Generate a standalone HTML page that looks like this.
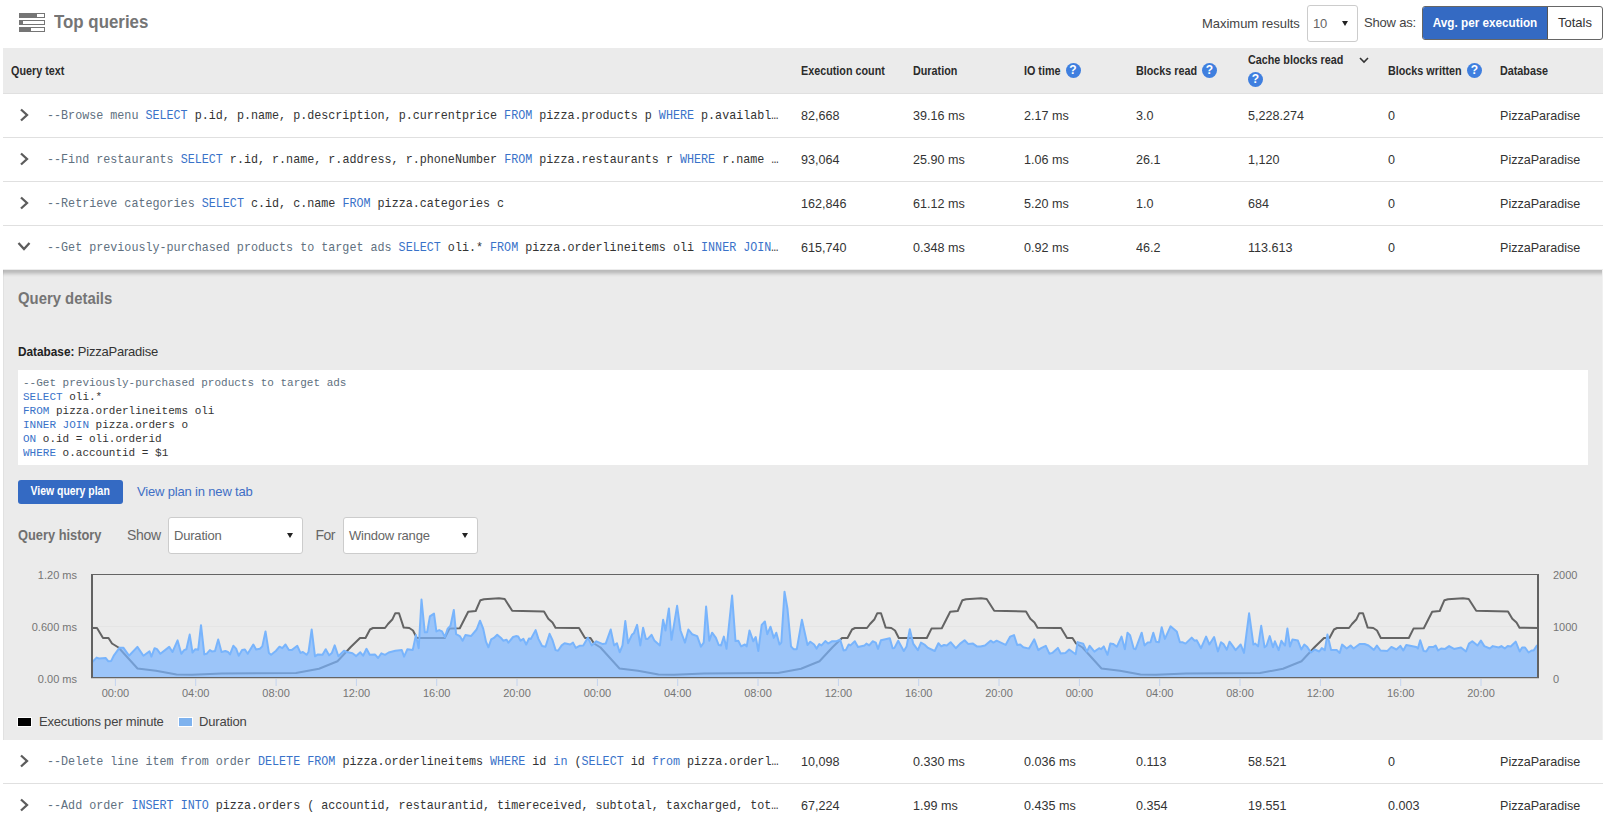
<!DOCTYPE html>
<html lang="en">
<head>
<meta charset="utf-8">
<title>Top queries</title>
<style>
*{box-sizing:border-box;}
html,body{margin:0;padding:0;background:#fff;}
body{width:1604px;height:824px;overflow:hidden;position:relative;font-family:"Liberation Sans",Arial,sans-serif;font-size:13px;color:#333;}
.abs{position:absolute;white-space:nowrap;}
/* title */
.title-icon{position:absolute;left:19px;top:13px;width:26px;height:19px;}
h1.title{position:absolute;left:54px;top:10px;margin:0;font-size:18.9px;line-height:24px;font-weight:bold;color:#757575;white-space:nowrap;transform:scaleX(.893);transform-origin:0 50%;}
/* top controls */
.ctl-label{position:absolute;font-size:13px;line-height:16px;color:#444;white-space:nowrap;letter-spacing:-0.03px;}
.select{position:absolute;background:#fff;border:1px solid #ccc;border-radius:3px;font-size:13px;color:#666;white-space:nowrap;}
.select span{position:absolute;left:5px;letter-spacing:-0.2px;top:50%;margin-top:-8px;line-height:16px;}
.select i{position:absolute;right:9px;top:50%;margin-top:-3px;width:0;height:0;border-left:3px solid transparent;border-right:3px solid transparent;border-top:5px solid #222;}
.btngroup{position:absolute;left:1422px;top:6px;width:181px;height:34px;border:1px solid #666;border-radius:3px;overflow:hidden;background:#fff;}
.btngroup .on{position:absolute;left:0;top:0;width:125px;height:32px;background:#346ac3;color:#fff;font-weight:bold;font-size:12.8px;line-height:32px;text-align:center;border-right:1px solid #555;}
.btngroup .off{position:absolute;left:125px;top:0;width:54px;height:32px;color:#333;font-size:13px;line-height:32px;text-align:center;}
/* table */
table.q{position:absolute;left:3px;top:48px;width:1600px;border-collapse:collapse;table-layout:fixed;}
table.q th{height:45px;line-height:15px;background:#ebebeb;text-align:left;font-size:12.4px;font-weight:bold;color:#2b2b2b;padding:3px 0 0 8px;vertical-align:middle;white-space:nowrap;border-bottom:1px solid #e0e0e0;position:relative;}
table.q td{height:44px;padding:0 0 0 8px;font-size:13px;letter-spacing:-0.22px;color:#333;vertical-align:middle;white-space:nowrap;border-bottom:1px solid #e0e0e0;overflow:hidden;}
table.q td.qt{padding-left:0;position:relative;}
.v{display:inline-block;font-size:13.4px;letter-spacing:0;transform:scaleX(.938);transform-origin:0 50%;}
.chev{position:absolute;left:16px;top:14px;width:10px;height:14px;}
.sql{position:absolute;left:44px;top:14.5px;letter-spacing:0;font-family:"Liberation Mono","DejaVu Sans Mono",monospace;font-size:12.2px;line-height:16px;color:#333;white-space:pre;transform:scaleX(.9615);transform-origin:0 50%;}
.c{color:#607080;}
.k{color:#3972c9;}
.ht{display:inline-block;transform:scaleX(.87);transform-origin:0 50%;}
.help{display:inline-block;width:15px;height:15px;border-radius:50%;background:#3f7fdf;color:#fff;font-size:12px;line-height:15px;text-align:center;font-weight:bold;letter-spacing:0;position:absolute;top:15px;}
/* details panel */
.panel{z-index:1;position:absolute;left:3px;top:270px;width:1600px;height:470px;background:#ebebeb linear-gradient(to bottom,#bbb 0,#bbb .5px,#bebebe 1.5px,#c5c5c5 2.5px,#d0d0d0 3.5px,#dadada 4.5px,#e3e3e3 5.5px,#e8e8e8 6.5px,#ebebeb 7.5px) no-repeat;background-size:100% 8px;border-right:1px solid #f1f1f1;box-shadow:inset 1px 0 0 0 rgba(0,0,0,.04);}
.panel h2{position:absolute;left:15px;top:19px;margin:0;font-size:16px;line-height:20px;font-weight:bold;color:#757575;white-space:nowrap;transform:scaleX(.929);transform-origin:0 50%;}
.dbline{position:absolute;left:15px;top:74px;font-size:13px;line-height:16px;color:#333;white-space:nowrap;letter-spacing:-0.22px;}
.dbline b{color:#222;letter-spacing:0;font-size:13.4px;display:inline-block;transform:scaleX(.881);transform-origin:0 50%;margin-right:-7.6px;}
pre.code{position:absolute;left:15px;top:100px;width:1570px;height:95px;margin:0;background:#fff;padding:6px 0 0 5px;font-family:"Liberation Mono","DejaVu Sans Mono",monospace;font-size:11.5px;letter-spacing:0;line-height:14px;color:#333;}
pre.code code{display:block;font:inherit;transform:scaleX(.9565);transform-origin:0 0;}
.btn{position:absolute;left:15px;top:210px;width:105px;height:24px;background:#346ac3;border-radius:3px;color:#fff;font-weight:bold;font-size:11.9px;line-height:23px;text-align:center;white-space:nowrap;}
.btn span,.btngroup .on span{display:inline-block;transform-origin:50% 50%;}
.btn span{transform:scaleX(.877);}
.btngroup .on span{transform:scaleX(.916);}
a.link{position:absolute;left:134px;top:214px;font-size:13px;letter-spacing:-0.17px;line-height:16px;color:#3f6fc6;text-decoration:none;white-space:nowrap;}
.qh{position:absolute;left:15px;top:256px;font-size:14.3px;line-height:18px;font-weight:bold;color:#707070;white-space:nowrap;transform:scaleX(.898);transform-origin:0 50%;}
.lbl{position:absolute;font-size:14px;line-height:18px;color:#666;white-space:nowrap;letter-spacing:-0.3px;}
.legend{position:absolute;font-size:13px;line-height:16px;color:#444;white-space:nowrap;letter-spacing:-0.19px;}
.sw{position:absolute;width:15px;height:10px;border:1px solid #fff;}
svg.chart{position:absolute;left:0;top:290px;}
svg.chart text{font-family:"Liberation Sans",Arial,sans-serif;font-size:11px;fill:#757575;}
table.q tr.open td{border-bottom-color:#ececec;}
/* bottom table */
table.q2{top:740px;}
table.q2 tr:first-child td{height:43px;}
table.q2 tr:first-child .sql{top:13.5px;}
</style>
</head>
<body>

<svg class="title-icon" viewBox="0 0 26 19" aria-hidden="true">
  <g fill="#757575"><rect x="0" y="0" width="18" height="5"/><rect x="0" y="7" width="4" height="5"/><rect x="0" y="14" width="12" height="5"/></g>
  <g fill="#fff" stroke="#757575" stroke-width="1"><rect x="17.5" y="0.5" width="8" height="4"/><rect x="3.5" y="7.5" width="22" height="4"/><rect x="11.5" y="14.5" width="14" height="4"/></g>
</svg>
<h1 class="title">Top queries</h1>

<div class="ctl-label" style="left:1202px;top:16px;">Maximum results</div>
<div class="select" style="left:1307px;top:5px;width:51px;height:37px;"><span>10</span><i></i></div>
<div class="ctl-label" style="left:1364px;top:15px;letter-spacing:-0.2px;">Show as:</div>
<div class="btngroup"><div class="on"><span>Avg. per execution</span></div><div class="off">Totals</div></div>

<table class="q">
<colgroup><col style="width:790px"><col style="width:112px"><col style="width:111px"><col style="width:112px"><col style="width:112px"><col style="width:140px"><col style="width:112px"><col style="width:111px"></colgroup>
<thead><tr>
<th><span class="ht">Query text</span></th>
<th><span class="ht">Execution count</span></th>
<th><span class="ht">Duration</span></th>
<th><span class="ht">IO time</span><span class="help" style="left:49.5px;">?</span></th>
<th><span class="ht">Blocks read</span><span class="help" style="left:74px;">?</span></th>
<th class="cbr"><div class="abs ht" style="left:8px;top:5px;line-height:14px;">Cache blocks read</div><svg class="abs" style="left:119px;top:9px;" width="10" height="7" viewBox="0 0 10 7"><path d="M1 1 L5 5 L9 1" fill="none" stroke="#333" stroke-width="1.6"/></svg><span class="help" style="left:8px;top:24px;">?</span></th>
<th><span class="ht">Blocks written</span><span class="help" style="left:87px;">?</span></th>
<th><span class="ht">Database</span></th>
</tr></thead>
<tbody>
<tr><td class="qt"><svg class="chev" viewBox="0 0 10 14"><path d="M2 1.5 L8 7 L2 12.5" fill="none" stroke="#5c5c5c" stroke-width="2.3"/></svg><div class="sql"><span class="c">--Browse menu</span> <span class="k">SELECT</span> p.id, p.name, p.description, p.currentprice <span class="k">FROM</span> pizza.products p <span class="k">WHERE</span> p.availabl…</div></td><td><span class="v">82,668</span></td><td><span class="v">39.16 ms</span></td><td><span class="v">2.17 ms</span></td><td><span class="v">3.0</span></td><td><span class="v">5,228.274</span></td><td><span class="v">0</span></td><td><span class="v">PizzaParadise</span></td></tr>
<tr><td class="qt"><svg class="chev" viewBox="0 0 10 14"><path d="M2 1.5 L8 7 L2 12.5" fill="none" stroke="#5c5c5c" stroke-width="2.3"/></svg><div class="sql"><span class="c">--Find restaurants</span> <span class="k">SELECT</span> r.id, r.name, r.address, r.phoneNumber <span class="k">FROM</span> pizza.restaurants r <span class="k">WHERE</span> r.name …</div></td><td><span class="v">93,064</span></td><td><span class="v">25.90 ms</span></td><td><span class="v">1.06 ms</span></td><td><span class="v">26.1</span></td><td><span class="v">1,120</span></td><td><span class="v">0</span></td><td><span class="v">PizzaParadise</span></td></tr>
<tr><td class="qt"><svg class="chev" viewBox="0 0 10 14"><path d="M2 1.5 L8 7 L2 12.5" fill="none" stroke="#5c5c5c" stroke-width="2.3"/></svg><div class="sql"><span class="c">--Retrieve categories</span> <span class="k">SELECT</span> c.id, c.name <span class="k">FROM</span> pizza.categories c</div></td><td><span class="v">162,846</span></td><td><span class="v">61.12 ms</span></td><td><span class="v">5.20 ms</span></td><td><span class="v">1.0</span></td><td><span class="v">684</span></td><td><span class="v">0</span></td><td><span class="v">PizzaParadise</span></td></tr>
<tr class="open"><td class="qt"><svg class="chev" style="left:14px;top:15px;width:14px;height:10px;" viewBox="0 0 14 10"><path d="M1.5 2 L7 8 L12.5 2" fill="none" stroke="#5c5c5c" stroke-width="2.3"/></svg><div class="sql"><span class="c">--Get previously-purchased products to target ads</span> <span class="k">SELECT</span> oli.* <span class="k">FROM</span> pizza.orderlineitems oli <span class="k">INNER JOIN</span>…</div></td><td><span class="v">615,740</span></td><td><span class="v">0.348 ms</span></td><td><span class="v">0.92 ms</span></td><td><span class="v">46.2</span></td><td><span class="v">113.613</span></td><td><span class="v">0</span></td><td><span class="v">PizzaParadise</span></td></tr>
</tbody>
</table>

<div class="panel">
  <h2>Query details</h2>
  <div class="dbline"><b>Database:</b> PizzaParadise</div>
<pre class="code"><code><span class="c">--Get previously-purchased products to target ads</span>
<span class="k">SELECT</span> oli.*
<span class="k">FROM</span> pizza.orderlineitems oli
<span class="k">INNER JOIN</span> pizza.orders o
<span class="k">ON</span> o.id = oli.orderid
<span class="k">WHERE</span> o.accountid = $1</code></pre>
  <div class="btn"><span>View query plan</span></div>
  <a class="link">View plan in new tab</a>
  <div class="qh">Query history</div>
  <div class="lbl" style="left:124px;top:256px;">Show</div>
  <div class="select" style="left:165px;top:247px;width:135px;height:37px;"><span>Duration</span><i></i></div>
  <div class="lbl" style="left:312.5px;top:256px;letter-spacing:-0.5px;">For</div>
  <div class="select" style="left:340px;top:247px;width:135px;height:37px;"><span>Window range</span><i></i></div>
  <svg class="chart" style="left:-3px;top:290px;" width="1604" height="150" viewBox="0 560 1604 150">
<line x1="92" y1="626.5" x2="1538" y2="626.5" stroke="#e5e5e5" stroke-width="1"/>
<polyline points="92.0,628.0 97.0,628.0 103.0,638.0 108.5,638.0 112.0,643.5 118.5,647.5 137.5,668.5 156.0,670.7 176.5,674.4 192.0,674.8 222.0,673.5 296.0,673.0 319.0,668.8 337.5,661.3 350.5,647.3 360.0,638.0 365.5,638.0 370.0,629.5 373.0,628.0 385.0,628.0 388.0,624.0 392.5,619.2 395.3,613.2 399.0,613.2 403.7,627.6 409.3,628.0 413.0,630.5 416.8,638.0 444.8,638.0 449.5,628.6 459.8,628.3 468.2,611.8 475.7,611.0 480.4,600.2 484.0,599.2 499.0,598.3 504.7,599.0 512.2,610.8 544.0,611.4 548.3,618.8 552.5,622.5 555.5,627.8 574.0,628.0 579.0,628.0 585.0,638.0 590.5,638.0 594.0,643.5 600.5,647.5 619.5,668.5 638.0,670.7 658.5,674.4 674.0,674.8 704.0,673.5 778.0,673.0 801.0,668.8 819.5,661.3 832.5,647.3 842.0,638.0 847.5,638.0 852.0,629.5 855.0,628.0 867.0,628.0 870.0,624.0 874.5,619.2 877.3,613.2 881.0,613.2 885.7,627.6 891.3,628.0 895.0,630.5 898.8,638.0 926.8,638.0 931.5,628.6 941.8,628.3 950.2,611.8 957.7,611.0 962.4,600.2 966.0,599.2 981.0,598.3 986.7,599.0 994.2,610.8 1026.0,611.4 1030.3,618.8 1034.5,622.5 1037.5,627.8 1056.0,628.0 1061.0,628.0 1067.0,638.0 1072.5,638.0 1076.0,643.5 1082.5,647.5 1101.5,668.5 1120.0,670.7 1140.5,674.4 1156.0,674.8 1186.0,673.5 1260.0,673.0 1283.0,668.8 1301.5,661.3 1314.5,647.3 1324.0,638.0 1329.5,638.0 1334.0,629.5 1337.0,628.0 1349.0,628.0 1352.0,624.0 1356.5,619.2 1359.3,613.2 1363.0,613.2 1367.7,627.6 1373.3,628.0 1377.0,630.5 1380.8,638.0 1408.8,638.0 1413.5,628.6 1423.8,628.3 1432.2,611.8 1439.7,611.0 1444.4,600.2 1448.0,599.2 1463.0,598.3 1468.7,599.0 1476.2,610.8 1508.0,611.4 1512.3,618.8 1516.5,622.5 1519.5,627.8 1538.0,628.0" fill="none" stroke="#646464" stroke-width="2" stroke-linejoin="round"/>
<polygon points="92.1,677.5 92.1,662.3 96.6,657.6 99.0,658.5 105.6,658.0 108.4,661.3 111.2,660.9 114.0,655.3 119.6,647.7 123.3,647.7 129.0,655.7 137.4,646.9 143.4,655.7 149.5,651.4 151.4,656.6 154.6,648.2 157.0,649.2 160.4,653.8 169.2,646.9 172.5,652.0 177.6,640.4 181.3,653.8 184.1,650.1 186.4,649.2 189.7,634.6 192.5,652.5 195.3,649.2 198.2,649.7 201.0,625.2 204.3,654.4 206.6,653.8 209.9,650.1 212.2,651.6 215.0,651.0 218.2,639.4 221.5,652.0 225.3,651.0 228.1,652.0 230.0,654.4 233.3,645.8 236.1,648.6 238.7,655.7 242.1,650.1 244.9,649.5 247.7,653.8 253.3,644.5 256.1,649.5 259.9,648.8 262.3,646.4 265.5,631.4 268.9,652.9 271.1,654.8 275.8,651.0 279.5,646.7 282.3,648.2 285.5,644.5 288.9,650.1 291.7,650.1 297.3,645.8 300.5,652.9 302.9,652.0 306.6,654.8 308.5,652.0 311.7,629.5 315.0,656.3 317.9,654.4 322.5,654.8 325.7,649.2 329.1,655.3 331.9,652.9 334.7,645.4 338.4,656.3 344.0,650.7 346.8,652.0 352.5,653.3 356.2,656.1 360.3,652.3 363.1,655.7 366.5,648.8 369.7,654.8 374.9,654.4 378.1,658.0 381.4,653.3 385.0,654.8 388.7,652.5 395.3,650.7 401.8,650.1 404.1,656.6 407.4,649.2 412.7,650.1 415.9,635.1 418.7,648.2 421.5,599.6 424.8,632.3 427.1,632.3 429.9,616.4 434.0,613.6 436.4,631.4 439.2,630.1 442.0,631.4 444.9,637.0 447.7,628.6 450.5,625.8 453.8,609.9 456.1,634.2 459.8,636.1 462.6,640.7 465.4,635.1 471.0,636.1 476.6,629.5 480.0,620.7 483.2,628.6 486.0,641.7 488.4,647.3 491.2,639.4 493.9,637.9 497.2,634.8 501.0,637.9 503.2,640.7 506.6,639.8 508.4,642.6 513.1,637.0 515.9,636.1 518.2,636.6 520.6,640.7 523.4,638.9 526.2,644.5 529.0,638.5 530.9,638.9 535.6,630.1 538.4,638.9 542.1,646.0 545.5,646.7 549.6,633.8 552.4,639.8 555.6,650.1 558.0,650.7 561.7,645.4 564.6,643.2 570.2,644.5 573.0,642.6 575.8,647.9 579.5,645.8 583.3,645.4 587.9,637.6 591.7,645.4 596.3,641.3 602.9,644.1 605.7,643.6 610.7,629.5 614.1,645.4 616.9,643.2 619.7,652.3 622.5,645.4 625.3,621.1 628.1,643.2 631.9,634.8 633.8,633.3 637.1,624.9 640.3,645.4 643.1,627.7 645.9,638.9 647.8,638.9 651.5,634.8 654.3,640.4 659.9,645.4 663.1,619.8 665.5,630.5 668.9,608.4 671.5,639.8 677.1,605.8 680.5,630.5 685.0,642.6 688.4,629.5 692.1,634.2 697.2,636.1 700.9,646.7 703.7,642.6 706.1,606.5 709.3,640.7 712.1,632.7 715.9,637.9 718.7,645.0 721.1,645.4 723.9,636.6 726.5,648.8 732.1,595.5 735.5,641.1 738.3,640.7 741.1,646.4 744.9,644.5 746.7,646.4 749.5,630.5 753.3,641.3 755.7,637.0 758.3,651.0 761.7,624.9 764.9,621.5 767.3,634.2 770.5,626.7 773.8,637.9 776.3,632.7 779.5,644.5 781.3,642.6 784.5,591.7 787.5,609.0 791.0,646.4 793.5,649.2 796.8,649.2 801.9,619.8 807.5,645.0 810.3,641.7 814.1,644.5 816.5,648.6 819.3,644.1 821.5,645.4 825.3,641.1 828.1,643.6 831.8,641.3 836.5,641.3 840.2,639.8 843.6,650.5 845.8,650.1 848.7,644.5 850.5,645.4 854.8,641.3 858.0,646.9 864.6,645.4 866.4,643.6 869.2,645.4 872.6,641.3 875.8,642.6 878.0,648.8 881.0,640.2 889.8,638.3 892.6,648.2 894.5,647.9 898.2,640.7 903.8,651.0 906.6,646.4 909.8,629.2 913.2,643.6 917.9,650.1 921.0,642.6 924.4,644.5 928.1,647.9 934.7,651.0 938.4,643.2 941.2,646.4 944.0,645.0 946.8,645.4 950.6,642.2 955.8,648.2 959.9,643.9 964.6,640.2 968.4,644.1 973.0,643.6 976.8,646.4 980.5,646.4 985.0,645.4 990.6,640.7 993.4,642.6 996.6,640.7 1005.6,644.9 1010.2,636.6 1014.0,635.1 1017.2,645.0 1020.2,644.5 1023.3,647.3 1029.0,648.6 1034.2,639.4 1038.3,650.1 1041.1,648.2 1045.8,645.8 1049.5,653.8 1052.3,652.9 1057.9,647.9 1060.7,653.5 1065.4,652.9 1069.2,649.5 1075.7,654.2 1077.6,642.1 1083.2,643.6 1086.9,651.6 1089.7,645.8 1094.4,651.6 1099.1,648.2 1101.0,649.2 1103.8,646.4 1107.5,654.8 1110.3,643.6 1113.1,643.9 1116.9,646.7 1121.5,636.6 1124.9,649.2 1127.5,632.7 1130.0,635.1 1133.7,648.6 1135.6,649.2 1141.7,632.7 1144.5,645.4 1147.7,642.6 1150.5,642.2 1153.3,632.7 1156.1,641.7 1158.9,642.2 1161.7,627.3 1164.9,638.9 1170.5,626.3 1176.7,631.4 1179.9,642.2 1182.3,642.2 1185.5,643.6 1191.7,637.6 1194.5,640.7 1196.7,640.2 1201.0,648.2 1206.1,636.6 1209.4,644.5 1214.1,637.0 1217.9,651.4 1221.0,642.2 1223.5,644.1 1226.8,649.7 1229.5,641.7 1232.3,645.4 1235.6,650.1 1240.7,644.5 1244.0,652.9 1249.1,613.3 1253.4,644.5 1255.3,643.6 1258.1,646.4 1261.2,625.8 1264.6,647.3 1266.5,645.8 1269.7,636.1 1273.0,647.3 1274.9,641.3 1278.6,650.1 1281.4,640.7 1283.3,643.6 1285.0,645.5 1287.4,628.6 1290.0,646.5 1292.4,639.6 1297.9,640.6 1301.3,649.5 1304.3,644.6 1307.3,647.1 1310.9,652.5 1314.8,649.5 1319.2,651.5 1321.8,648.1 1324.8,650.1 1327.4,634.6 1331.1,649.9 1336.7,650.1 1339.7,652.9 1342.1,644.6 1346.7,648.5 1350.6,645.5 1353.6,648.5 1359.6,644.0 1364.6,644.0 1368.5,645.5 1373.9,649.9 1376.9,645.5 1380.5,650.5 1387.4,650.9 1391.4,646.9 1396.4,649.5 1400.3,645.9 1403.3,650.5 1406.3,645.1 1416.3,646.9 1417.9,648.5 1420.2,640.2 1423.6,650.9 1426.2,651.5 1429.2,646.9 1433.2,647.1 1435.6,645.5 1438.1,650.5 1441.1,648.5 1445.1,648.9 1449.1,646.1 1454.0,648.9 1461.0,647.5 1466.0,651.5 1469.0,643.6 1472.3,641.2 1477.5,645.5 1480.9,640.6 1484.3,646.1 1489.8,648.5 1492.8,646.1 1498.8,647.5 1501.4,646.1 1504.8,648.5 1507.7,646.1 1510.7,646.5 1515.7,641.6 1519.7,651.5 1522.1,647.5 1525.0,647.5 1528.6,652.5 1531.6,650.5 1533.6,650.5 1537.2,645.1 1537.2,677.5" fill="#7ab5ff" fill-opacity="0.7" stroke="none"/>
<polyline points="92.1,662.3 96.6,657.6 99.0,658.5 105.6,658.0 108.4,661.3 111.2,660.9 114.0,655.3 119.6,647.7 123.3,647.7 129.0,655.7 137.4,646.9 143.4,655.7 149.5,651.4 151.4,656.6 154.6,648.2 157.0,649.2 160.4,653.8 169.2,646.9 172.5,652.0 177.6,640.4 181.3,653.8 184.1,650.1 186.4,649.2 189.7,634.6 192.5,652.5 195.3,649.2 198.2,649.7 201.0,625.2 204.3,654.4 206.6,653.8 209.9,650.1 212.2,651.6 215.0,651.0 218.2,639.4 221.5,652.0 225.3,651.0 228.1,652.0 230.0,654.4 233.3,645.8 236.1,648.6 238.7,655.7 242.1,650.1 244.9,649.5 247.7,653.8 253.3,644.5 256.1,649.5 259.9,648.8 262.3,646.4 265.5,631.4 268.9,652.9 271.1,654.8 275.8,651.0 279.5,646.7 282.3,648.2 285.5,644.5 288.9,650.1 291.7,650.1 297.3,645.8 300.5,652.9 302.9,652.0 306.6,654.8 308.5,652.0 311.7,629.5 315.0,656.3 317.9,654.4 322.5,654.8 325.7,649.2 329.1,655.3 331.9,652.9 334.7,645.4 338.4,656.3 344.0,650.7 346.8,652.0 352.5,653.3 356.2,656.1 360.3,652.3 363.1,655.7 366.5,648.8 369.7,654.8 374.9,654.4 378.1,658.0 381.4,653.3 385.0,654.8 388.7,652.5 395.3,650.7 401.8,650.1 404.1,656.6 407.4,649.2 412.7,650.1 415.9,635.1 418.7,648.2 421.5,599.6 424.8,632.3 427.1,632.3 429.9,616.4 434.0,613.6 436.4,631.4 439.2,630.1 442.0,631.4 444.9,637.0 447.7,628.6 450.5,625.8 453.8,609.9 456.1,634.2 459.8,636.1 462.6,640.7 465.4,635.1 471.0,636.1 476.6,629.5 480.0,620.7 483.2,628.6 486.0,641.7 488.4,647.3 491.2,639.4 493.9,637.9 497.2,634.8 501.0,637.9 503.2,640.7 506.6,639.8 508.4,642.6 513.1,637.0 515.9,636.1 518.2,636.6 520.6,640.7 523.4,638.9 526.2,644.5 529.0,638.5 530.9,638.9 535.6,630.1 538.4,638.9 542.1,646.0 545.5,646.7 549.6,633.8 552.4,639.8 555.6,650.1 558.0,650.7 561.7,645.4 564.6,643.2 570.2,644.5 573.0,642.6 575.8,647.9 579.5,645.8 583.3,645.4 587.9,637.6 591.7,645.4 596.3,641.3 602.9,644.1 605.7,643.6 610.7,629.5 614.1,645.4 616.9,643.2 619.7,652.3 622.5,645.4 625.3,621.1 628.1,643.2 631.9,634.8 633.8,633.3 637.1,624.9 640.3,645.4 643.1,627.7 645.9,638.9 647.8,638.9 651.5,634.8 654.3,640.4 659.9,645.4 663.1,619.8 665.5,630.5 668.9,608.4 671.5,639.8 677.1,605.8 680.5,630.5 685.0,642.6 688.4,629.5 692.1,634.2 697.2,636.1 700.9,646.7 703.7,642.6 706.1,606.5 709.3,640.7 712.1,632.7 715.9,637.9 718.7,645.0 721.1,645.4 723.9,636.6 726.5,648.8 732.1,595.5 735.5,641.1 738.3,640.7 741.1,646.4 744.9,644.5 746.7,646.4 749.5,630.5 753.3,641.3 755.7,637.0 758.3,651.0 761.7,624.9 764.9,621.5 767.3,634.2 770.5,626.7 773.8,637.9 776.3,632.7 779.5,644.5 781.3,642.6 784.5,591.7 787.5,609.0 791.0,646.4 793.5,649.2 796.8,649.2 801.9,619.8 807.5,645.0 810.3,641.7 814.1,644.5 816.5,648.6 819.3,644.1 821.5,645.4 825.3,641.1 828.1,643.6 831.8,641.3 836.5,641.3 840.2,639.8 843.6,650.5 845.8,650.1 848.7,644.5 850.5,645.4 854.8,641.3 858.0,646.9 864.6,645.4 866.4,643.6 869.2,645.4 872.6,641.3 875.8,642.6 878.0,648.8 881.0,640.2 889.8,638.3 892.6,648.2 894.5,647.9 898.2,640.7 903.8,651.0 906.6,646.4 909.8,629.2 913.2,643.6 917.9,650.1 921.0,642.6 924.4,644.5 928.1,647.9 934.7,651.0 938.4,643.2 941.2,646.4 944.0,645.0 946.8,645.4 950.6,642.2 955.8,648.2 959.9,643.9 964.6,640.2 968.4,644.1 973.0,643.6 976.8,646.4 980.5,646.4 985.0,645.4 990.6,640.7 993.4,642.6 996.6,640.7 1005.6,644.9 1010.2,636.6 1014.0,635.1 1017.2,645.0 1020.2,644.5 1023.3,647.3 1029.0,648.6 1034.2,639.4 1038.3,650.1 1041.1,648.2 1045.8,645.8 1049.5,653.8 1052.3,652.9 1057.9,647.9 1060.7,653.5 1065.4,652.9 1069.2,649.5 1075.7,654.2 1077.6,642.1 1083.2,643.6 1086.9,651.6 1089.7,645.8 1094.4,651.6 1099.1,648.2 1101.0,649.2 1103.8,646.4 1107.5,654.8 1110.3,643.6 1113.1,643.9 1116.9,646.7 1121.5,636.6 1124.9,649.2 1127.5,632.7 1130.0,635.1 1133.7,648.6 1135.6,649.2 1141.7,632.7 1144.5,645.4 1147.7,642.6 1150.5,642.2 1153.3,632.7 1156.1,641.7 1158.9,642.2 1161.7,627.3 1164.9,638.9 1170.5,626.3 1176.7,631.4 1179.9,642.2 1182.3,642.2 1185.5,643.6 1191.7,637.6 1194.5,640.7 1196.7,640.2 1201.0,648.2 1206.1,636.6 1209.4,644.5 1214.1,637.0 1217.9,651.4 1221.0,642.2 1223.5,644.1 1226.8,649.7 1229.5,641.7 1232.3,645.4 1235.6,650.1 1240.7,644.5 1244.0,652.9 1249.1,613.3 1253.4,644.5 1255.3,643.6 1258.1,646.4 1261.2,625.8 1264.6,647.3 1266.5,645.8 1269.7,636.1 1273.0,647.3 1274.9,641.3 1278.6,650.1 1281.4,640.7 1283.3,643.6 1285.0,645.5 1287.4,628.6 1290.0,646.5 1292.4,639.6 1297.9,640.6 1301.3,649.5 1304.3,644.6 1307.3,647.1 1310.9,652.5 1314.8,649.5 1319.2,651.5 1321.8,648.1 1324.8,650.1 1327.4,634.6 1331.1,649.9 1336.7,650.1 1339.7,652.9 1342.1,644.6 1346.7,648.5 1350.6,645.5 1353.6,648.5 1359.6,644.0 1364.6,644.0 1368.5,645.5 1373.9,649.9 1376.9,645.5 1380.5,650.5 1387.4,650.9 1391.4,646.9 1396.4,649.5 1400.3,645.9 1403.3,650.5 1406.3,645.1 1416.3,646.9 1417.9,648.5 1420.2,640.2 1423.6,650.9 1426.2,651.5 1429.2,646.9 1433.2,647.1 1435.6,645.5 1438.1,650.5 1441.1,648.5 1445.1,648.9 1449.1,646.1 1454.0,648.9 1461.0,647.5 1466.0,651.5 1469.0,643.6 1472.3,641.2 1477.5,645.5 1480.9,640.6 1484.3,646.1 1489.8,648.5 1492.8,646.1 1498.8,647.5 1501.4,646.1 1504.8,648.5 1507.7,646.1 1510.7,646.5 1515.7,641.6 1519.7,651.5 1522.1,647.5 1525.0,647.5 1528.6,652.5 1531.6,650.5 1533.6,650.5 1537.2,645.1" fill="none" stroke="#78b4fc" stroke-width="2" stroke-linejoin="round"/>
<path d="M92 574 V678" stroke="#626262" stroke-width="2" fill="none"/>
<path d="M1538 574 V678" stroke="#626262" stroke-width="2" fill="none"/>
<path d="M91 574.5 H1539" stroke="#646464" stroke-width="1.2" fill="none"/>
<path d="M91 677.6 H1539" stroke="#646464" stroke-width="1.2" fill="none"/>
<line x1="115.4" y1="679" x2="115.4" y2="686" stroke="#c3d4f0" stroke-width="1"/>
<text x="115.4" y="696.5" text-anchor="middle">00:00</text>
<line x1="195.7" y1="679" x2="195.7" y2="686" stroke="#c3d4f0" stroke-width="1"/>
<text x="195.7" y="696.5" text-anchor="middle">04:00</text>
<line x1="276.1" y1="679" x2="276.1" y2="686" stroke="#c3d4f0" stroke-width="1"/>
<text x="276.1" y="696.5" text-anchor="middle">08:00</text>
<line x1="356.4" y1="679" x2="356.4" y2="686" stroke="#c3d4f0" stroke-width="1"/>
<text x="356.4" y="696.5" text-anchor="middle">12:00</text>
<line x1="436.7" y1="679" x2="436.7" y2="686" stroke="#c3d4f0" stroke-width="1"/>
<text x="436.7" y="696.5" text-anchor="middle">16:00</text>
<line x1="517.0" y1="679" x2="517.0" y2="686" stroke="#c3d4f0" stroke-width="1"/>
<text x="517.0" y="696.5" text-anchor="middle">20:00</text>
<line x1="597.4" y1="679" x2="597.4" y2="686" stroke="#c3d4f0" stroke-width="1"/>
<text x="597.4" y="696.5" text-anchor="middle">00:00</text>
<line x1="677.7" y1="679" x2="677.7" y2="686" stroke="#c3d4f0" stroke-width="1"/>
<text x="677.7" y="696.5" text-anchor="middle">04:00</text>
<line x1="758.0" y1="679" x2="758.0" y2="686" stroke="#c3d4f0" stroke-width="1"/>
<text x="758.0" y="696.5" text-anchor="middle">08:00</text>
<line x1="838.4" y1="679" x2="838.4" y2="686" stroke="#c3d4f0" stroke-width="1"/>
<text x="838.4" y="696.5" text-anchor="middle">12:00</text>
<line x1="918.7" y1="679" x2="918.7" y2="686" stroke="#c3d4f0" stroke-width="1"/>
<text x="918.7" y="696.5" text-anchor="middle">16:00</text>
<line x1="999.0" y1="679" x2="999.0" y2="686" stroke="#c3d4f0" stroke-width="1"/>
<text x="999.0" y="696.5" text-anchor="middle">20:00</text>
<line x1="1079.4" y1="679" x2="1079.4" y2="686" stroke="#c3d4f0" stroke-width="1"/>
<text x="1079.4" y="696.5" text-anchor="middle">00:00</text>
<line x1="1159.7" y1="679" x2="1159.7" y2="686" stroke="#c3d4f0" stroke-width="1"/>
<text x="1159.7" y="696.5" text-anchor="middle">04:00</text>
<line x1="1240.0" y1="679" x2="1240.0" y2="686" stroke="#c3d4f0" stroke-width="1"/>
<text x="1240.0" y="696.5" text-anchor="middle">08:00</text>
<line x1="1320.4" y1="679" x2="1320.4" y2="686" stroke="#c3d4f0" stroke-width="1"/>
<text x="1320.4" y="696.5" text-anchor="middle">12:00</text>
<line x1="1400.7" y1="679" x2="1400.7" y2="686" stroke="#c3d4f0" stroke-width="1"/>
<text x="1400.7" y="696.5" text-anchor="middle">16:00</text>
<line x1="1481.0" y1="679" x2="1481.0" y2="686" stroke="#c3d4f0" stroke-width="1"/>
<text x="1481.0" y="696.5" text-anchor="middle">20:00</text>
<text x="77" y="579" text-anchor="end">1.20 ms</text>
<text x="77" y="631" text-anchor="end">0.600 ms</text>
<text x="77" y="682.5" text-anchor="end">0.00 ms</text>
<text x="1553" y="579">2000</text>
<text x="1553" y="631">1000</text>
<text x="1553" y="682.5">0</text>
</svg>
  <div class="sw" style="left:14px;top:447px;background:#000;"></div>
  <div class="legend" style="left:36px;top:444px;">Executions per minute</div>
  <div class="sw" style="left:175px;top:447px;background:#7eb2ee;"></div>
  <div class="legend" style="left:196px;top:444px;">Duration</div>
</div>

<table class="q q2">
<colgroup><col style="width:790px"><col style="width:112px"><col style="width:111px"><col style="width:112px"><col style="width:112px"><col style="width:140px"><col style="width:112px"><col style="width:111px"></colgroup>
<tbody>
<tr><td class="qt"><svg class="chev" viewBox="0 0 10 14"><path d="M2 1.5 L8 7 L2 12.5" fill="none" stroke="#5c5c5c" stroke-width="2.3"/></svg><div class="sql"><span class="c">--Delete line item from order</span> <span class="k">DELETE FROM</span> pizza.orderlineitems <span class="k">WHERE</span> id <span class="k">in</span> (<span class="k">SELECT</span> id <span class="k">from</span> pizza.orderl…</div></td><td><span class="v">10,098</span></td><td><span class="v">0.330 ms</span></td><td><span class="v">0.036 ms</span></td><td><span class="v">0.113</span></td><td><span class="v">58.521</span></td><td><span class="v">0</span></td><td><span class="v">PizzaParadise</span></td></tr>
<tr><td class="qt"><svg class="chev" viewBox="0 0 10 14"><path d="M2 1.5 L8 7 L2 12.5" fill="none" stroke="#5c5c5c" stroke-width="2.3"/></svg><div class="sql"><span class="c">--Add order</span> <span class="k">INSERT INTO</span> pizza.orders ( accountid, restaurantid, timereceived, subtotal, taxcharged, tot…</div></td><td><span class="v">67,224</span></td><td><span class="v">1.99 ms</span></td><td><span class="v">0.435 ms</span></td><td><span class="v">0.354</span></td><td><span class="v">19.551</span></td><td><span class="v">0.003</span></td><td><span class="v">PizzaParadise</span></td></tr>
</tbody>
</table>

</body>
</html>
